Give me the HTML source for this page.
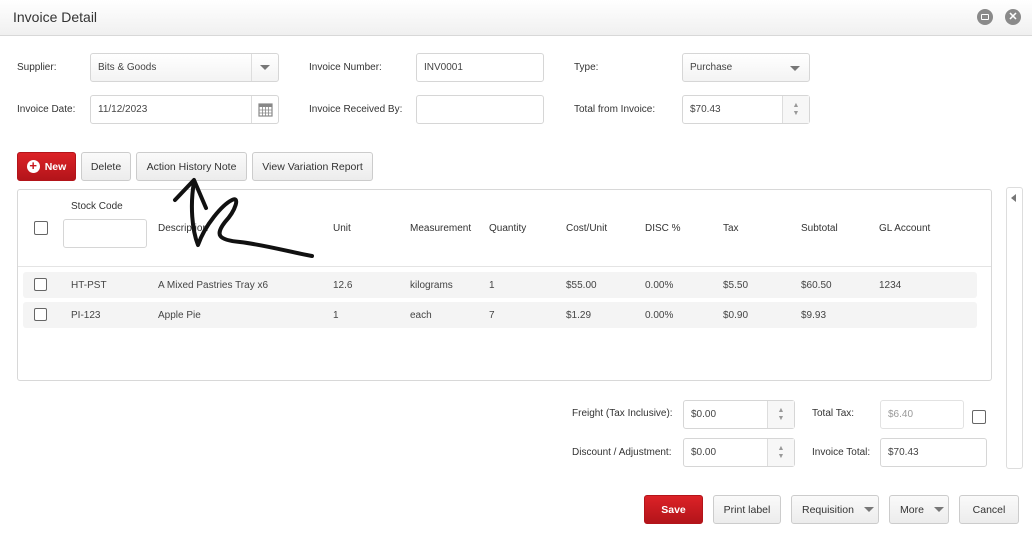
<!DOCTYPE html>
<html><head><meta charset="utf-8"><style>
*{box-sizing:border-box;margin:0;padding:0}
body{width:1032px;height:538px;background:#fff;font-family:"Liberation Sans",Arial,sans-serif;font-size:10px;color:#333;position:relative;overflow:hidden}
.a{position:absolute}
.hdr{left:0;top:0;width:1032px;height:36px;background:linear-gradient(#fff,#f0f0f0);border-bottom:1px solid #d8d8d8}
.lbl{font-size:10px;color:#333}
.inp{border:1px solid #d6d6d6;border-radius:3px;background:#fff;padding-left:7px;display:flex;align-items:center;color:#444}
.sel{background:linear-gradient(#fff,#f3f3f3)}
.btn{border:1px solid #ccc;border-radius:3px;background:linear-gradient(#fafafa,#ececec);display:flex;align-items:center;justify-content:center;color:#333;font-size:10.5px}
.red{background:linear-gradient(#dc2227,#b3141a);border-color:#b3141a;color:#fff;font-weight:bold}
.cb{width:13px;height:13px;border:1.5px solid #666;border-radius:2px;background:#fff}
.side{border-left:1px solid #ddd;height:100%}
.row{left:23px;width:954px;height:26px;background:#f4f4f4;border-radius:3px}
.tri{width:0;height:0;border-left:5px solid transparent;border-right:5px solid transparent;border-top:5px solid #777}
.spin{background:#f7f7f7;color:#999;font-size:7px;text-align:center;line-height:8px;padding-top:6px}
</style></head><body>
<div class="a hdr"></div>
<div class="a" style="left:13px;top:9px;font-size:14px;color:#333">Invoice Detail</div>
<div class="a" style="left:977px;top:9px;width:16px;height:16px;border-radius:50%;background:#8a8a8a"><div class="a" style="left:4px;top:5px;width:8px;height:6px;border:1.5px solid #fff;border-radius:1px"></div></div>
<div class="a" style="left:1005px;top:9px;width:16px;height:16px;border-radius:50%;background:#8a8a8a;color:#fff;font-size:11px;font-weight:bold;text-align:center;line-height:16px">✕</div>

<div class="a lbl" style="left:17px;top:62px">Supplier:</div>
<div class="a inp sel" style="left:90px;top:53px;width:189px;height:29px">Bits &amp; Goods</div>
<div class="a side" style="left:251px;top:54px;height:27px;width:27px;display:flex;align-items:center;justify-content:center"><div class="tri"></div></div>
<div class="a lbl" style="left:17px;top:104px">Invoice Date:</div>
<div class="a inp" style="left:90px;top:95px;width:189px;height:29px">11/12/2023</div>
<div class="a side" style="left:251px;top:96px;height:27px;width:27px;display:flex;align-items:center;justify-content:center"><svg width="15" height="15" viewBox="0 0 15 15"><rect x="1" y="2" width="13" height="12" fill="none" stroke="#888" stroke-width="1.2"/><rect x="1" y="2" width="13" height="3" fill="#888"/><path d="M1 8h13M1 11h13M4.5 5v9M7.5 5v9M10.5 5v9" stroke="#888" stroke-width=".8"/></svg></div>

<div class="a lbl" style="left:309px;top:62px">Invoice Number:</div>
<div class="a inp" style="left:416px;top:53px;width:128px;height:29px">INV0001</div>
<div class="a lbl" style="left:309px;top:104px">Invoice Received By:</div>
<div class="a inp" style="left:416px;top:95px;width:128px;height:29px"></div>

<div class="a lbl" style="left:574px;top:62px">Type:</div>
<div class="a inp sel" style="left:682px;top:53px;width:128px;height:29px">Purchase</div>
<div class="a tri" style="left:790px;top:66px"></div>
<div class="a lbl" style="left:574px;top:104px">Total from Invoice:</div>
<div class="a inp" style="left:682px;top:95px;width:128px;height:29px">$70.43</div>
<div class="a side spin" style="left:782px;top:96px;width:27px;height:27px">▲<br>▼</div>

<div class="a btn red" style="left:17px;top:152px;width:59px;height:29px"><span style="display:inline-block;width:13px;height:13px;border-radius:50%;background:#fff;color:#c8161c;font-size:13px;line-height:12px;text-align:center;margin-right:5px">+</span>New</div>
<div class="a btn" style="left:81px;top:152px;width:50px;height:29px">Delete</div>
<div class="a btn" style="left:136px;top:152px;width:111px;height:29px">Action History Note</div>
<div class="a btn" style="left:252px;top:152px;width:121px;height:29px">View Variation Report</div>

<div class="a" style="left:17px;top:189px;width:975px;height:192px;border:1px solid #d8d8d8;border-radius:3px"></div>
<div class="a" style="left:18px;top:266px;width:973px;height:1px;background:#e4e4e4"></div>
<div class="a cb" style="left:34px;top:221px;width:14px;height:14px"></div>
<div class="a" style="left:71px;top:201px">Stock Code</div>
<div class="a inp" style="left:63px;top:219px;width:84px;height:29px"></div>
<div class="a" style="left:158px;top:223px">Description</div>
<div class="a" style="left:333px;top:223px">Unit</div>
<div class="a" style="left:410px;top:223px">Measurement</div>
<div class="a" style="left:489px;top:223px">Quantity</div>
<div class="a" style="left:566px;top:223px">Cost/Unit</div>
<div class="a" style="left:645px;top:223px">DISC %</div>
<div class="a" style="left:723px;top:223px">Tax</div>
<div class="a" style="left:801px;top:223px">Subtotal</div>
<div class="a" style="left:879px;top:223px">GL Account</div>

<div class="a row" style="top:272px"></div>
<div class="a row" style="top:302px"></div>
<div class="a cb" style="left:34px;top:278px"></div>
<div class="a cb" style="left:34px;top:308px"></div>
<div class="a" style="left:71px;top:280px;color:#444">HT-PST</div>
<div class="a" style="left:158px;top:280px;color:#444">A Mixed Pastries Tray x6</div>
<div class="a" style="left:333px;top:280px;color:#444">12.6</div>
<div class="a" style="left:410px;top:280px;color:#444">kilograms</div>
<div class="a" style="left:489px;top:280px;color:#444">1</div>
<div class="a" style="left:566px;top:280px;color:#444">$55.00</div>
<div class="a" style="left:645px;top:280px;color:#444">0.00%</div>
<div class="a" style="left:723px;top:280px;color:#444">$5.50</div>
<div class="a" style="left:801px;top:280px;color:#444">$60.50</div>
<div class="a" style="left:879px;top:280px;color:#444">1234</div>
<div class="a" style="left:71px;top:310px;color:#444">PI-123</div>
<div class="a" style="left:158px;top:310px;color:#444">Apple Pie</div>
<div class="a" style="left:333px;top:310px;color:#444">1</div>
<div class="a" style="left:410px;top:310px;color:#444">each</div>
<div class="a" style="left:489px;top:310px;color:#444">7</div>
<div class="a" style="left:566px;top:310px;color:#444">$1.29</div>
<div class="a" style="left:645px;top:310px;color:#444">0.00%</div>
<div class="a" style="left:723px;top:310px;color:#444">$0.90</div>
<div class="a" style="left:801px;top:310px;color:#444">$9.93</div>

<div class="a" style="left:1006px;top:187px;width:17px;height:282px;border:1px solid #ddd;border-radius:3px"></div>
<div class="a" style="left:1011px;top:194px;width:0;height:0;border-top:4px solid transparent;border-bottom:4px solid transparent;border-right:5px solid #777"></div>

<svg class="a" style="left:0;top:0" width="1032" height="538"><g fill="none" stroke="#111" stroke-width="4" stroke-linecap="round" stroke-linejoin="round">
<path d="M175 200 L194 180 L206 208"/>
<path d="M194 182 C190 205 192 230 198 245 C205 225 222 205 232 200 C240 196 236 210 225 222 C215 235 218 240 240 242 C265 245 290 252 312 256"/>
</g></svg>

<div class="a lbl" style="left:572px;top:408px">Freight (Tax Inclusive):</div>
<div class="a inp" style="left:683px;top:400px;width:112px;height:29px">$0.00</div>
<div class="a side spin" style="left:767px;top:401px;width:27px;height:27px">▲<br>▼</div>
<div class="a lbl" style="left:572px;top:447px">Discount / Adjustment:</div>
<div class="a inp" style="left:683px;top:438px;width:112px;height:29px">$0.00</div>
<div class="a side spin" style="left:767px;top:439px;width:27px;height:27px">▲<br>▼</div>
<div class="a lbl" style="left:812px;top:408px">Total Tax:</div>
<div class="a inp" style="left:880px;top:400px;width:84px;height:29px;color:#999;border-color:#e2e2e2">$6.40</div>
<div class="a cb" style="left:972px;top:410px;width:14px;height:14px"></div>
<div class="a lbl" style="left:812px;top:447px">Invoice Total:</div>
<div class="a inp" style="left:880px;top:438px;width:107px;height:29px">$70.43</div>

<div class="a btn red" style="left:644px;top:495px;width:59px;height:29px">Save</div>
<div class="a btn" style="left:713px;top:495px;width:68px;height:29px">Print label</div>
<div class="a btn" style="left:791px;top:495px;width:88px;height:29px;justify-content:flex-start;padding-left:10px">Requisition<div class="tri" style="margin-left:10px"></div></div>
<div class="a btn" style="left:889px;top:495px;width:60px;height:29px;justify-content:flex-start;padding-left:10px">More<div class="tri" style="margin-left:10px"></div></div>
<div class="a btn" style="left:959px;top:495px;width:60px;height:29px">Cancel</div>
</body></html>
